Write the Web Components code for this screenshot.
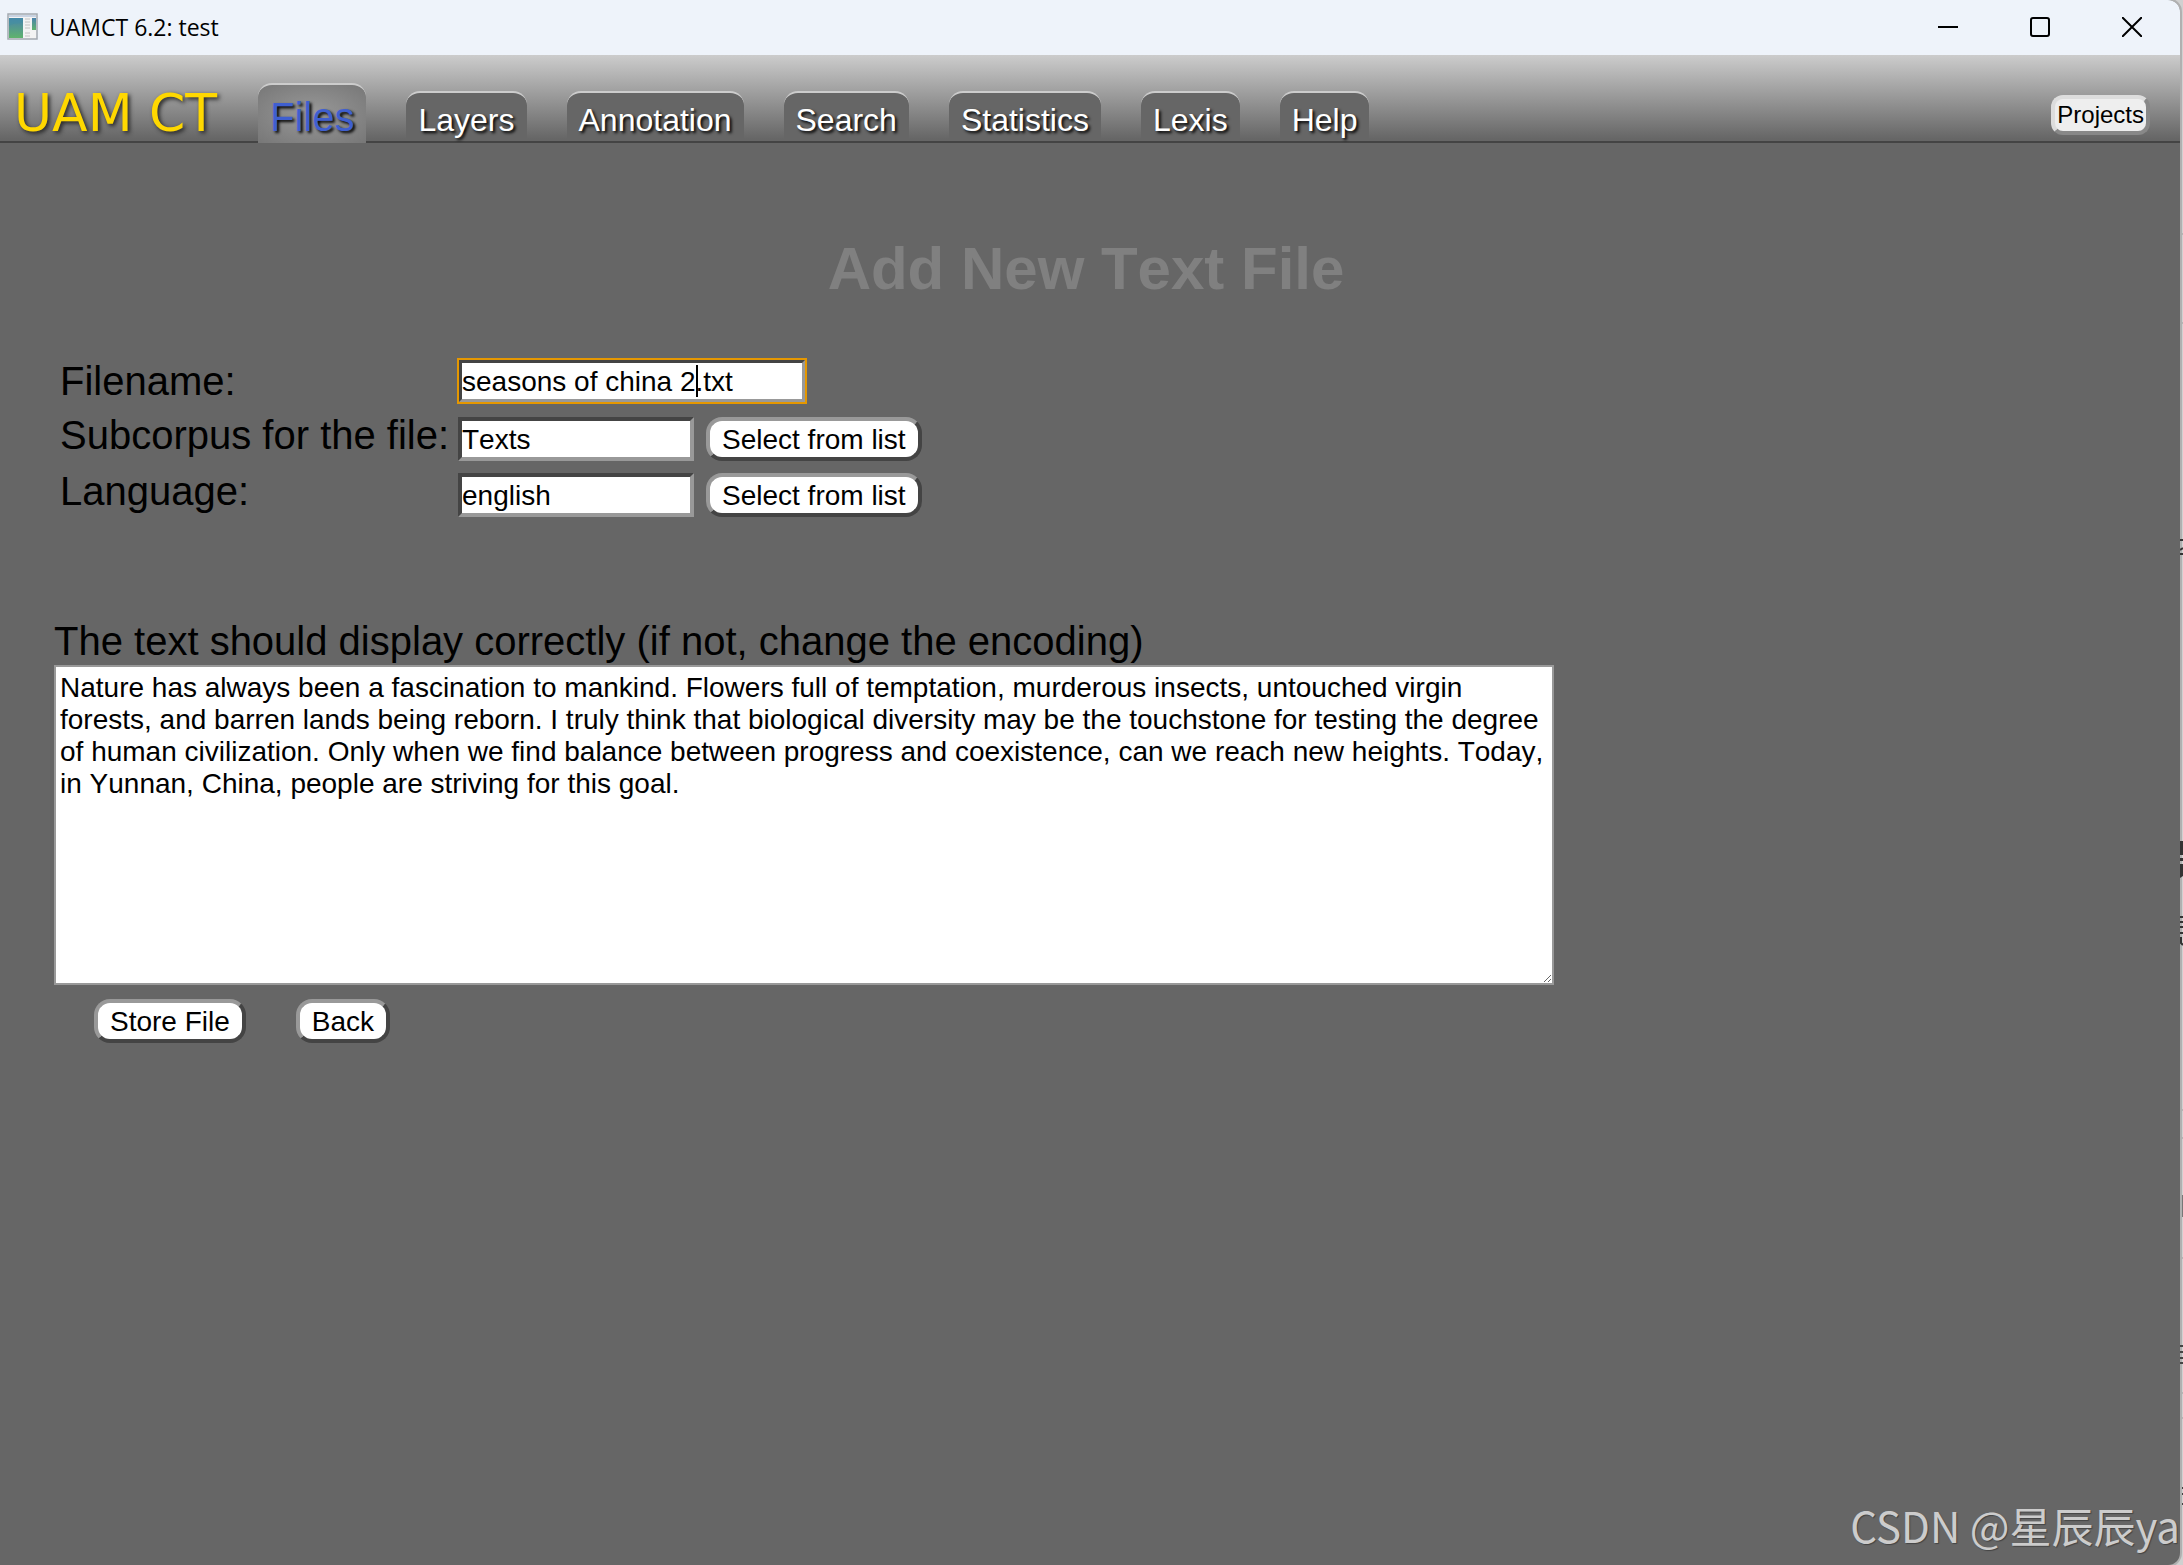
<!DOCTYPE html>
<html lang="en">
<head>
<meta charset="utf-8">
<title>UAMCT 6.2: test</title>
<style>
  html, body {
    height: 100%;
  }
  body {
    margin: 0;
    background: #d0d0d0;
    font-family: "Liberation Sans", Arial, sans-serif;
    font-kerning: none;
    overflow: hidden;
  }
</style>
</head>
<body>
<app-window>
  <title-bar slot="title">UAMCT 6.2: test</title-bar>
  <nav-bar slot="nav">
    <nav-tab href="#files" active>Files</nav-tab>
    <nav-tab href="#layers">Layers</nav-tab>
    <nav-tab href="#annotation">Annotation</nav-tab>
    <nav-tab href="#search">Search</nav-tab>
    <nav-tab href="#statistics">Statistics</nav-tab>
    <nav-tab href="#lexis">Lexis</nav-tab>
    <nav-tab href="#help">Help</nav-tab>
  </nav-bar>
  <add-file-form>
    <field-row label="Filename:" value="seasons of china 2.txt" wide focused></field-row>
    <field-row label="Subcorpus for the file:" value="Texts"><push-button>Select from list</push-button></field-row>
    <field-row label="Language:" value="english"><push-button>Select from list</push-button></field-row>
  </add-file-form>
  <water-mark slot="mark">CSDN @星辰辰ya</water-mark>
</app-window>
<script>
function define(name, html, setup) {
  customElements.define(name, class extends HTMLElement {
    constructor() {
      super();
      this.attachShadow({ mode: 'open' }).innerHTML = html;
    }
    connectedCallback() {
      if (setup) setup(this, this.shadowRoot);
    }
  });
}

define('app-window', `
  <style>
    :host {
      display: flex;
      height: 100%;
    }
    .window {
      position: relative;
      display: flex;
      flex-direction: column;
      flex: 1;
      min-width: 0;
      background: #666;
      border-radius: 0 12px 12px 0;
      box-shadow: 0 0 0 2px #b0b0b0;
    }
    main {
      flex: 1;
    }
    /* sliver of the window behind */
    .behind {
      position: relative;
      flex: none;
      width: 3px;
      height: 100%;
    }
  </style>
  <div class="window">
    <slot name="title"></slot>
    <slot name="nav"></slot>
    <main><slot></slot></main>
    <slot name="mark"></slot>
  </div>
  <svg class="behind" viewBox="0 0 3 1565" preserveAspectRatio="none" aria-hidden="true">
    <path d="M0 540h3M0 550l3-2M0 554h3" stroke="#333" stroke-width="2" fill="none"/>
    <path d="M0 841h3v14H0zM0 858h3v3H0zM0 864h3v12l-3 2z" fill="#333"/>
    <path d="M0 917h3M0 922h3M0 927h3M0 933h3M1 937v6l2 2" stroke="#333" stroke-width="2" fill="none"/>
    <path d="M0 1346h3M0 1352h3M0 1358h3M0 1363h3" stroke="#444" stroke-width="2"/>
    <path d="M2 1488h1M2 1494h1M2 1504h1" stroke="#444" stroke-width="2"/>
    <path d="M2 1195h1v22H2z" fill="#777"/>
    <path d="M2 234h1M2 323h1M2 1110h1M2 1138h1M2 1258h1M2 1393h1M2 1418h1" stroke="#999"/>
  </svg>
`);

define('title-bar', `
  <style>
    :host {
      display: flex;
      align-items: center;
      height: 55px;
      box-sizing: border-box;
      padding: 0 2px 2px 7px;
      background: #eef3fa;
      border-radius: 0 12px 0 0;
      font: 23px "Open Sans", "Noto Sans", sans-serif;
      color: #000;
    }
    .name {
      flex: 1;
      margin-left: 10px;
    }
    button {
      display: flex;
      align-items: center;
      justify-content: center;
      width: 92px;
      height: 52px;
      padding: 0;
      border: 0;
      background: none;
    }
  </style>
  <svg width="32" height="28" viewBox="0 0 32 28">
    <defs>
      <linearGradient id="pane" x1="0" y1="0" x2="0" y2="1">
        <stop offset="0" stop-color="#4a82ad"/>
        <stop offset="1" stop-color="#5fb36c"/>
      </linearGradient>
    </defs>
    <rect x="1" y="1" width="29" height="25" fill="#f3f3f3" stroke="#a3a9b0" stroke-width="1.5"/>
    <path d="M2 3h27" stroke="#c9d3e2" stroke-width="2"/>
    <rect x="2" y="5" width="14" height="20" fill="url(#pane)"/>
    <path d="M2 13c6-4 9-1 14-4v-4H2z" fill="#3f8fa3" opacity=".5"/>
    <path d="M18 6h5M18 9h5M18 12h5M18 15h5M18 20h5M18 23h5" stroke="#c2c2c2"/>
    <rect x="25" y="5" width="4" height="12" fill="url(#pane)"/>
  </svg>
  <span class="name"><slot></slot></span>
  <button aria-label="Minimize"><svg width="20" height="20"><path d="M0 10h20" stroke="#000" stroke-width="2"/></svg></button>
  <button aria-label="Maximize"><svg width="20" height="20"><rect x="1" y="1" width="18" height="18" rx="2" fill="none" stroke="#000" stroke-width="2"/></svg></button>
  <button aria-label="Close"><svg width="20" height="20"><path d="M0 0l20 20M20 0L0 20" stroke="#000" stroke-width="2"/></svg></button>
`);

define('nav-bar', `
  <style>
    :host {
      display: flex;
      align-items: flex-end;
      height: 88px;
      box-sizing: border-box;
      padding: 0 30px 0 14px;
      background: linear-gradient(#ccc, #666 84px) no-repeat;
      border-bottom: 2px solid #444;
    }
    .logo {
      flex: none;
      width: 244px;
      padding-bottom: 2px;
      font: 52px/52px "DejaVu Sans", Verdana, sans-serif;
      color: #ffd800;
      text-shadow: 2px 2px 4px #222;
      white-space: nowrap;
    }
    nav {
      display: flex;
      align-items: flex-end;
      gap: 40px;
      margin-bottom: -2px;
    }
    push-button {
      margin: 0 0 6px auto;
    }
  </style>
  <div class="logo">UAM CT</div>
  <nav><slot></slot></nav>
  <push-button small>Projects</push-button>
`);

define('nav-tab', `
  <style>
    :host {
      display: block;
      padding-bottom: 2px;
    }
    :host([active]) {
      padding-bottom: 0;
    }
    a {
      display: block;
      height: 50px;
      box-sizing: border-box;
      padding: 5px 12px 0;
      border-top: 2px solid #ccc;
      border-radius: 14px 14px 0 0;
      background: #666;
      color: #fff;
      font-size: 32px;
      line-height: 44px;
      text-decoration: none;
      text-shadow: 2px 2px 3px #000;
    }
    :host([active]) a {
      height: 60px;
      background: radial-gradient(#999, #777);
      color: #3f5fd0;
      font-size: 40px;
      line-height: 54px;
    }
  </style>
  <a><slot></slot></a>
`, (host, root) => {
  root.querySelector('a').href = host.getAttribute('href');
});

define('push-button', `
  <style>
    :host {
      display: block;
    }
    button {
      display: block;
      height: 44px;
      padding: 2px 12px 0;
      border: 4px solid;
      border-color: #999 #444 #444 #999;
      border-radius: 16px;
      background: #fff;
      color: #000;
      font: 28px/34px "Liberation Sans", Arial, sans-serif;
      font-kerning: none;
      white-space: nowrap;
    }
    :host([small]) button {
      height: 40px;
      padding: 0 2px;
      border-color: #ddd #888 #888 #ddd;
      border-radius: 12px;
      background: #eee;
      font-size: 24px;
      line-height: 32px;
    }
  </style>
  <button type="button"><slot></slot></button>
`);

define('field-row', `
  <style>
    :host {
      display: flex;
      align-items: flex-end;
      height: 48px;
    }
    :host([focused]) {
      height: 46px;
      align-items: flex-start;
    }
    label {
      align-self: flex-start;
      flex: none;
      width: 398px;
      font-size: 40px;
      line-height: 44px;
      white-space: nowrap;
    }
    .box {
      position: relative;
      margin-right: 12px;
    }
    input {
      display: block;
      width: 236px;
      height: 44px;
      box-sizing: border-box;
      padding: 2px 0 0;
      border: 4px solid;
      border-color: #444 #999 #999 #444;
      border-radius: 0;
      background: #fff;
      color: #000;
      font: 28px "Liberation Sans", Arial, sans-serif;
      font-kerning: none;
      outline: none;
    }
    :host([wide]) input {
      width: 348px;
    }
    :host([focused]) input {
      outline: 2px solid #e59700;
      outline-offset: -1px;
    }
    .caret {
      display: none;
      position: absolute;
      left: 238px;
      top: 6px;
      width: 2px;
      height: 32px;
      background: #000;
    }
    :host([focused]) .caret {
      display: block;
    }
  </style>
  <label for="field"></label>
  <div class="box"><input id="field" type="text"><span class="caret"></span></div>
  <slot></slot>
`, (host, root) => {
  root.querySelector('label').textContent = host.getAttribute('label');
  root.querySelector('input').value = host.getAttribute('value');
});

define('add-file-form', `
  <style>
    :host {
      display: block;
      padding: 92px 54px 0;
      color: #000;
    }
    h1 {
      margin: 0 0 56px;
      padding-right: 8px;
      font-size: 60px;
      line-height: 68px;
      text-align: center;
      color: #808080;
    }
    .fields {
      display: flex;
      flex-direction: column;
      gap: 8px;
      padding-left: 6px;
    }
    label {
      display: block;
      margin-top: 102px;
      padding-bottom: 2px;
      font-size: 40px;
      line-height: 44px;
    }
    textarea {
      display: block;
      width: 100%;
      max-width: 1500px;
      height: 320px;
      box-sizing: border-box;
      padding: 5px 4px 4px;
      border: 2px solid #999;
      background: #fff;
      color: #000;
      font: 28px/32px "Liberation Sans", Arial, sans-serif;
      font-kerning: none;
      outline: none;
    }
    .actions {
      display: flex;
      gap: 50px;
      padding: 14px 40px;
    }
  </style>
  <h1>Add New Text File</h1>
  <div class="fields"><slot></slot></div>
  <label for="text">The text should display correctly (if not, change the encoding)</label>
  <textarea id="text">Nature has always been a fascination to mankind. Flowers full of temptation, murderous insects, untouched virgin forests, and barren lands being reborn. I truly think that biological diversity may be the touchstone for testing the degree of human civilization. Only when we find balance between progress and coexistence, can we reach new heights. Today, in Yunnan, China, people are striving for this goal.</textarea>
  <div class="actions">
    <push-button>Store File</push-button>
    <push-button>Back</push-button>
  </div>
`);

define('water-mark', `
  <style>
    :host {
      position: absolute;
      right: 0;
      bottom: 10px;
      font: 42px/60px "Noto Sans CJK SC", sans-serif;
      color: #ccc;
      text-shadow: 1px 1px 1px #444;
      white-space: nowrap;
    }
  </style>
  <slot></slot>
`);
</script>
</body>
</html>
